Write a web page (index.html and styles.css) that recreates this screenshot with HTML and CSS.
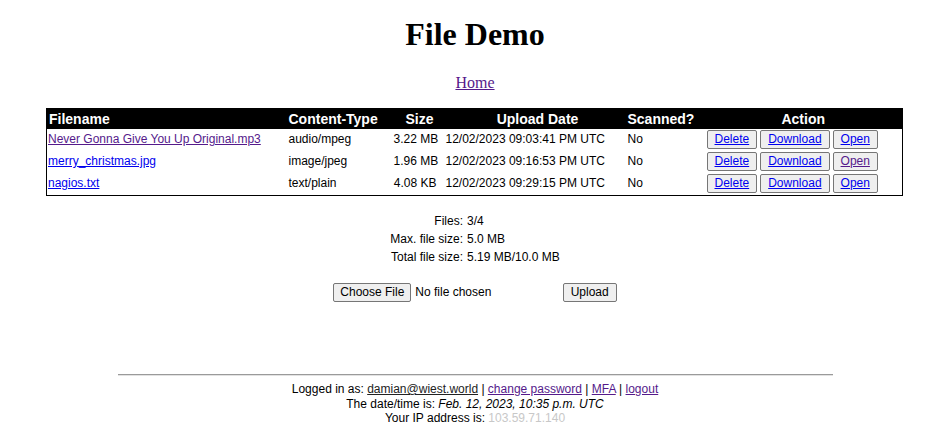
FILE: index.html
```html
<!DOCTYPE html>
<html lang="en">
<head>
  <meta charset="UTF-8" />
  <meta name="viewport" content="width=device-width, initial-scale=1.0"/>
  <title>File Demo</title>
  <link rel="stylesheet" href="styles.css">
</head>
<body>

  <!-- TITULO -->
  <h1 class="titulo">File Demo</h1>
  <p class="nav"><a href="#" class="visitado">Home</a></p>

  <!-- ARQUIVOS -->
  <table class="arquivos">
    <colgroup>
      <col class="c-nome">
      <col class="c-tipo">
      <col class="c-tam">
      <col class="c-data">
      <col class="c-scan">
      <col class="c-acao">
    </colgroup>
    <thead>
      <tr>
        <th class="esq">Filename</th>
        <th class="esq">Content-Type</th>
        <th class="th-tam">Size</th>
        <th class="th-data">Upload Date</th>
        <th class="esq">Scanned?</th>
        <th>Action</th>
      </tr>
    </thead>
    <tbody>
      <tr>
        <td><a href="#" class="visitado">Never Gonna Give You Up Original.mp3</a></td>
        <td>audio/mpeg</td>
        <td class="tam">3.22 MB</td>
        <td class="data">12/02/2023 09:03:41 PM UTC</td>
        <td>No</td>
        <td>
          <div class="acoes">
            <a href="#" class="btn">Delete</a>
            <a href="#" class="btn">Download</a>
            <a href="#" class="btn">Open</a>
          </div>
        </td>
      </tr>
      <tr>
        <td><a href="#">merry_christmas.jpg</a></td>
        <td>image/jpeg</td>
        <td class="tam">1.96 MB</td>
        <td class="data">12/02/2023 09:16:53 PM UTC</td>
        <td>No</td>
        <td>
          <div class="acoes">
            <a href="#" class="btn">Delete</a>
            <a href="#" class="btn">Download</a>
            <a href="#" class="btn visitado">Open</a>
          </div>
        </td>
      </tr>
      <tr>
        <td><a href="#">nagios.txt</a></td>
        <td>text/plain</td>
        <td class="tam">4.08 KB</td>
        <td class="data">12/02/2023 09:29:15 PM UTC</td>
        <td>No</td>
        <td>
          <div class="acoes">
            <a href="#" class="btn">Delete</a>
            <a href="#" class="btn">Download</a>
            <a href="#" class="btn">Open</a>
          </div>
        </td>
      </tr>
    </tbody>
  </table>

  <!-- RESUMO -->
  <table class="resumo">
    <tr><td class="rotulo">Files:</td><td>3/4</td></tr>
    <tr><td class="rotulo">Max. file size:</td><td>5.0 MB</td></tr>
    <tr><td class="rotulo">Total file size:</td><td>5.19 MB/10.0 MB</td></tr>
  </table>

  <form class="upload" onsubmit="return false;">
    <input type="file" name="arquivo" class="arquivo">
    <button type="submit" class="btn-upload">Upload</button>
  </form>

  <!-- RODAPE -->
  <div class="rodape">
    <hr class="linha">
    <p>Logged in as: <a href="#" class="usuario">damian@wiest.world</a> | <a href="#" class="visitado">change password</a> | <a href="#" class="visitado">MFA</a> | <a href="#" class="visitado">logout</a></p>
    <p>The date/time is: <em>Feb. 12, 2023, 10:35 p.m. UTC</em></p>
    <p>Your IP address is: <span class="ip">103.59.71.140</span></p>
  </div>

</body>
</html>
```

FILE: styles.css
```css
body {
  margin: 8px;
  font-family: "Liberation Serif", "Times New Roman", serif;
  color: #000;
  background: #fff;
}

a {
  color: #0000ee;
}

a.visitado {
  color: #551a8b;
}

.titulo {
  text-align: center;
  font-size: 32px;
  margin: 8px 0 21px;
}

.nav {
  text-align: center;
  font-size: 16px;
  margin: 0 0 16px;
}

/* tabela de arquivos */
.arquivos {
  width: 856px;
  margin: 0 0 0 38px;
  border-collapse: collapse;
  table-layout: fixed;
  border: 1px solid #000;
  font-family: "Liberation Sans", Arial, sans-serif;
  font-size: 12px;
}

.c-nome { width: 240px; }
.c-tipo { width: 105px; }
.c-tam { width: 50px; }
.c-data { width: 184px; }
.c-scan { width: 79px; }
.c-acao { width: 198px; }

.arquivos th {
  background-color: #000;
  color: #fff;
  font-size: 14px;
  font-weight: bold;
  padding: 1px 2px;
  line-height: 18px;
  text-align: center;
  white-space: nowrap;
}

.arquivos th.esq {
  text-align: left;
}

.arquivos th.th-tam {
  padding-left: 8px;
}

.arquivos th.th-data {
  padding-left: 10px;
}

.arquivos td {
  padding: 1px 2px 2px;
  line-height: 19px;
  white-space: nowrap;
}

.arquivos td:first-child {
  padding-left: 1px;
}

.arquivos td.tam {
  text-align: right;
  padding-right: 5px;
}

.arquivos td.data {
  padding-left: 4px;
}

.acoes {
  display: flex;
  gap: 3px;
}

.btn {
  display: inline-block;
  background-color: #efefef;
  border: 1px solid #767676;
  border-radius: 2px;
  padding: 1px 7px;
  line-height: 15px;
  font-size: 12px;
}

/* resumo */
.resumo {
  margin: 16px auto 0;
  border-collapse: collapse;
  font-family: "Liberation Sans", Arial, sans-serif;
  font-size: 12px;
}

.resumo td {
  padding: 1px 2px;
  line-height: 16px;
}

.resumo td.rotulo {
  text-align: right;
}

/* upload */
.upload {
  margin-top: 17px;
  text-align: center;
  font-family: "Liberation Sans", Arial, sans-serif;
  font-size: 12px;
}

.arquivo {
  width: 226px;
  font-family: "Liberation Sans", Arial, sans-serif;
  font-size: 12px;
}

.arquivo::file-selector-button,
.btn-upload {
  font-family: "Liberation Sans", Arial, sans-serif;
  font-size: 12px;
  background-color: #efefef;
  border: 1px solid #767676;
  border-radius: 2px;
  padding: 1px 6px;
  line-height: 15px;
  color: #000;
}

.btn-upload {
  padding: 1px 7px;
}

.arquivo::file-selector-button {
  margin-right: 4px;
}

/* rodape */
.rodape {
  margin-top: 72px;
  text-align: center;
  font-family: "Liberation Sans", Arial, sans-serif;
  font-size: 12px;
}

.linha {
  width: 715px;
  margin: 0 auto 6px;
  border: 0;
  border-top: 1px solid #9a9a9a;
  border-bottom: 1px solid #e2e2e2;
}

.rodape p {
  margin: 0;
  line-height: 14.5px;
}

.usuario {
  color: #222;
}

.ip {
  color: #c8c8c8;
}
```
